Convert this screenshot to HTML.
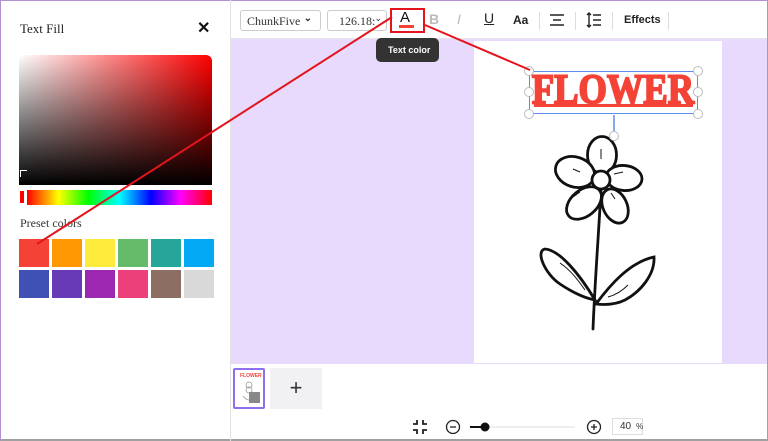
<!DOCTYPE html>
<html><head><meta charset="utf-8"><style>
*{box-sizing:border-box;margin:0;padding:0}
body{width:768px;height:441px;overflow:hidden;background:#fff;font-family:"Liberation Sans",sans-serif;position:relative}
.abs{position:absolute;white-space:nowrap}
</style></head><body>
<div class="abs" style="left:0;top:0;width:768px;height:441px;border:1px solid #b58fd6;border-bottom:2px solid #a0a0a0"></div>
<div class="abs" style="left:230px;top:0;width:1px;height:441px;background:#e3e3e3"></div>
<div class="abs" style="left:20px;top:21px;font-family:'Liberation Serif',serif;font-size:13px;color:#222">Text Fill</div>
<div class="abs" style="left:197px;top:18px;font-size:16px;font-weight:bold;color:#111">✕</div>
<div class="abs" style="left:19px;top:55px;width:193px;height:130px;border-radius:6px 6px 0 0;background:linear-gradient(to top,#000,rgba(0,0,0,0)),linear-gradient(to right,#fff,#f00)"></div>
<div class="abs" style="left:20px;top:170px;width:7px;height:7px;border-left:1px solid #fff;border-top:1px solid #fff"></div>
<div class="abs" style="left:19px;top:190px;width:6px;height:14px;background:#f00;border:1px solid #fff"></div>
<div class="abs" style="left:27px;top:190px;width:185px;height:15px;background:linear-gradient(to right,#f00,#ff0 17%,#0f0 33%,#0ff 50%,#00f 67%,#f0f 83%,#f00)"></div>
<div class="abs" style="left:20px;top:216px;font-family:'Liberation Serif',serif;font-size:12px;color:#333">Preset colors</div>
<div class="abs" style="left:19px;top:239px;display:grid;grid-template-columns:repeat(6,30px);grid-auto-rows:28px;gap:3px 3px">
<div style="background:#f44336"></div><div style="background:#ff9800"></div><div style="background:#ffeb3b"></div><div style="background:#66bb6a"></div><div style="background:#26a69a"></div><div style="background:#03a9f4"></div>
<div style="background:#3f51b5"></div><div style="background:#673ab7"></div><div style="background:#9c27b0"></div><div style="background:#ec407a"></div><div style="background:#8d6e63"></div><div style="background:#d9d9d9"></div>
</div>
<div class="abs" style="left:231px;top:38px;width:536px;height:1px;background:#e6e6e6"></div>
<div class="abs" style="left:240px;top:10px;width:81px;height:21px;border:1px solid #ccc;border-radius:3px;font-family:'Liberation Serif',serif;font-size:12px;color:#333;padding:3px 6px">ChunkFive <span style="position:absolute;right:8px;top:2px;font-size:10px;font-weight:bold">⌄</span></div>
<div class="abs" style="left:327px;top:10px;width:60px;height:21px;border:1px solid #ccc;border-radius:3px;font-family:'Liberation Serif',serif;font-size:12px;color:#333;padding:3px 0 0 11px;overflow:hidden">126.18:<span style="position:absolute;right:4px;top:2px;font-size:9px">⌄</span></div>
<div class="abs" style="left:400px;top:9px;font-size:15px;color:#111">A</div>
<div class="abs" style="left:399px;top:25px;width:15px;height:3px;background:#f44336"></div>
<div class="abs" style="left:390px;top:8px;width:35px;height:25px;border:2px solid #e3141c"></div>
<div class="abs" style="left:429px;top:11px;font-size:14px;font-weight:bold;color:#bbb">B</div>
<div class="abs" style="left:457px;top:11px;font-size:14px;font-style:italic;color:#bbb">I</div>
<div class="abs" style="left:484px;top:10px;font-size:14px;color:#222;text-decoration:underline">U</div>
<div class="abs" style="left:513px;top:13px;font-size:12px;font-weight:bold;color:#222">Aa</div>
<div class="abs" style="left:539px;top:12px;width:1px;height:18px;background:#ddd"></div>
<svg class="abs" style="left:549px;top:13px" width="16" height="14"><path d="M1 2h14M4 7h8M1 12h14" stroke="#222" stroke-width="1.5"/></svg>
<div class="abs" style="left:575px;top:12px;width:1px;height:18px;background:#ddd"></div>
<svg class="abs" style="left:586px;top:12px" width="16" height="16"><path d="M3 1v14M1 3l2-2 2 2M1 13l2 2 2-2M7 3h8M7 8h8M7 13h8" stroke="#222" stroke-width="1.4" fill="none"/></svg>
<div class="abs" style="left:612px;top:12px;width:1px;height:18px;background:#ddd"></div>
<div class="abs" style="left:624px;top:14px;font-size:11px;font-weight:bold;color:#222">Effects</div>
<div class="abs" style="left:668px;top:12px;width:1px;height:18px;background:#ddd"></div>
<div class="abs" style="left:231px;top:39px;width:536px;height:325px;background:#e8dafc"></div>
<div class="abs" style="left:474px;top:41px;width:248px;height:322px;background:#fff"></div>
<div class="abs" style="left:376px;top:38px;width:63px;height:24px;background:#333;border-radius:5px;color:#fff;font-size:9px;font-weight:bold;padding:7px 0 0 12px">Text color</div>
<div class="abs" style="left:529px;top:71px;width:169px;height:43px;border:1.5px solid #5b8def"></div>
<div class="abs" style="left:513px;top:64px;width:200px;text-align:center;font-family:'Liberation Serif',serif;font-weight:bold;font-size:44px;color:#f44336;-webkit-text-stroke:2px #f44336;transform:scale(0.83,0.95)">FLOWER</div>
<div class="abs" style="left:534px;top:104px;width:159px;height:3px;background:#f44336"></div>
<svg class="abs" style="left:0;top:0" width="768" height="441">
<g fill="#fff" stroke="#bbb" stroke-width="1">
<circle cx="529" cy="71" r="4.5"/><circle cx="698" cy="71" r="4.5"/><circle cx="529" cy="92" r="4.5"/><circle cx="698" cy="92" r="4.5"/><circle cx="529" cy="114" r="4.5"/><circle cx="698" cy="114" r="4.5"/>
</g>
<line x1="614" y1="115" x2="614" y2="134" stroke="#5b8def" stroke-width="1.5"/>
<g fill="#fff" stroke="#111" stroke-width="2.8" stroke-linecap="round">
<path d="M601 189c-2 40-6 90-8 140" fill="none"/>
<ellipse cx="602" cy="155" rx="14.5" ry="18.5"/>
<ellipse cx="575" cy="172" rx="20" ry="15" transform="rotate(18 575 172)"/>
<ellipse cx="584" cy="203" rx="20" ry="13" transform="rotate(-40 584 203)"/>
<ellipse cx="615" cy="206" rx="12" ry="18" transform="rotate(-25 615 206)"/>
<ellipse cx="624" cy="178" rx="18" ry="12.5" transform="rotate(5 624 178)"/>
<circle cx="601" cy="180" r="9"/>
<path d="M595 300C580 275 560 250 545 249C535 251 545 274 560 284C575 294 585 298 595 300Z"/>
<path d="M596 304C610 285 630 262 654 257C655 275 640 292 625 300C615 305 605 305 596 304Z"/>
</g>
<circle cx="614" cy="136" r="4.5" fill="#fff" stroke="#bbb"/>
<g fill="none" stroke="#111" stroke-width="1">
<path d="M601 149v10M580 172l-7-3M580 192l-7 5M611 193l4 6M614 174l9-2M560 263c12 8 20 20 25 27M628 285c-6 6-12 10-20 12"/>
</g>
<line x1="37" y1="244" x2="392" y2="17" stroke="#e3141c" stroke-width="2"/>
<line x1="425" y1="25" x2="530" y2="70" stroke="#e3141c" stroke-width="2"/>
</svg>
<div class="abs" style="left:233px;top:368px;width:32px;height:41px;border:2px solid #8d6ff0;border-radius:2px;background:#fff"></div>
<div class="abs" style="left:240px;top:373px;font-size:5px;font-weight:bold;color:#f44336">FLOWER</div>
<svg class="abs" style="left:241px;top:380px" width="18" height="22"><g fill="none" stroke="#999" stroke-width="0.8"><circle cx="8" cy="5" r="3"/><circle cx="8" cy="10" r="3"/><path d="M2 16c2 3 5 4 6 4"/></g></svg>
<div class="abs" style="left:249px;top:392px;width:11px;height:11px;background:#888"></div>
<div class="abs" style="left:270px;top:368px;width:52px;height:41px;background:#f1f1f3;text-align:center;font-size:22px;line-height:40px;color:#333;font-weight:300">+</div>
<svg class="abs" style="left:412px;top:419px" width="16" height="16"><path d="M5 1v4H1M11 1v4h4M5 15v-4H1M11 15v-4h4" stroke="#222" stroke-width="1.8" fill="none"/></svg>
<svg class="abs" style="left:444px;top:418px" width="200" height="18"><circle cx="9" cy="9" r="6.5" stroke="#222" stroke-width="1.3" fill="none"/><path d="M6 9h6" stroke="#222" stroke-width="1.3"/>
<line x1="26" y1="9" x2="131" y2="9" stroke="#ddd"/><line x1="26" y1="9" x2="41" y2="9" stroke="#111" stroke-width="2"/><circle cx="41" cy="9" r="4.5" fill="#111"/>
<circle cx="150" cy="9" r="6.5" stroke="#222" stroke-width="1.3" fill="none"/><path d="M147 9h6M150 6v6" stroke="#222" stroke-width="1.3"/></svg>
<div class="abs" style="left:612px;top:418px;width:31px;height:17px;border:1px solid #ddd;font-size:10px;color:#333;padding:2px 0 0 7px">40<span style="font-size:8px;margin-left:5px">%</span></div>
</body></html>
